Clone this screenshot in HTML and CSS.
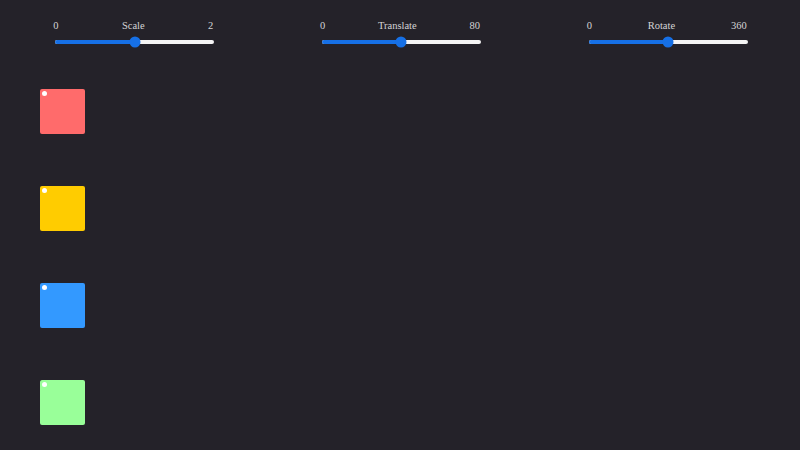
FILE: index.html
```html
<!DOCTYPE html>
<html>
<head>
<meta charset="utf-8">
<link rel="stylesheet" href="styles.css">
</head>
<body>
<div class="controls">
  <div class="control">
    <div class="labels"><span>0</span><span>Scale</span><span>2</span></div>
    <div class="slider"><div class="fill" style="width:50%"></div><div class="thumb" style="left:50%"></div></div>
  </div>
  <div class="control">
    <div class="labels"><span>0</span><span>Translate</span><span>80</span></div>
    <div class="slider"><div class="fill" style="width:50%"></div><div class="thumb" style="left:50%"></div></div>
  </div>
  <div class="control">
    <div class="labels"><span>0</span><span>Rotate</span><span>360</span></div>
    <div class="slider"><div class="fill" style="width:50%"></div><div class="thumb" style="left:50%"></div></div>
  </div>
</div>
<div class="boxes">
  <div class="box red"><span class="dot"></span></div>
  <div class="box yellow"><span class="dot"></span></div>
  <div class="box blue"><span class="dot"></span></div>
  <div class="box green"><span class="dot"></span></div>
</div>
</body>
</html>
```
FILE: styles.css
```css
html, body {
  margin: 0;
  padding: 0;
  background: #242229;
  width: 800px;
  height: 450px;
  overflow: hidden;
  font-family: "Liberation Serif", serif;
}
.controls {
  display: grid;
  grid-template-columns: repeat(3, 1fr);
  padding-top: 19px;
}
.control {
  width: 160px;
  margin: 0 auto;
}
.labels {
  display: flex;
  justify-content: space-between;
  color: #d4d4d6;
  font-size: 10.5px;
  line-height: 14px;
}
.slider {
  position: relative;
  width: 159px;
  height: 4px;
  margin: 7px 0 0 2px;
  border-radius: 2px;
  background: #f5f5f5;
}
.fill {
  height: 100%;
  border-radius: 2px;
  background: #1670e6;
}
.thumb {
  position: absolute;
  top: 50%;
  width: 11px;
  height: 11px;
  border-radius: 50%;
  background: #1670e6;
  transform: translate(-50%, -50%);
}
.boxes {
  display: flex;
  flex-direction: column;
  gap: 52px;
  padding: 45px 0 0 40px;
}
.box {
  position: relative;
  width: 45px;
  height: 45px;
  border-radius: 2px;
}
.red { background: #ff6b6b; }
.yellow { background: #ffcc00; }
.blue { background: #3399ff; }
.green { background: #99ff99; }
.dot {
  position: absolute;
  top: 2px;
  left: 2px;
  width: 5px;
  height: 5px;
  border-radius: 50%;
  background: #fff;
}
```
